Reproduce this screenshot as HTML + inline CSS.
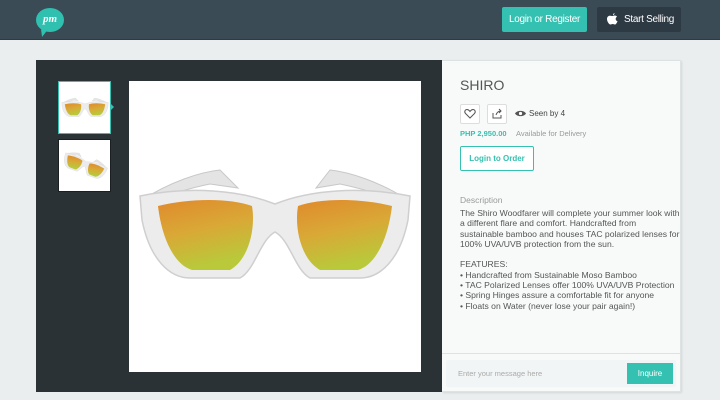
<!DOCTYPE html>
<html><head><meta charset="utf-8"><style>
*{margin:0;padding:0;box-sizing:border-box}
body{width:720px;height:400px;background:#ebeeef;font-family:"Liberation Sans",sans-serif;position:relative;overflow:hidden}
.hdr{position:absolute;left:0;top:0;width:720px;height:40px;background:#3b4b56;border-bottom:1px solid #2e3b44}
.logo{position:absolute;left:36px;top:8px;width:28px;height:24px;border-radius:50%;background:#2fc0b0;color:#fff;font:italic bold 11px "Liberation Serif",serif;text-align:center;line-height:23px}
.logo:after{content:"";position:absolute;left:4px;bottom:-5px;border-left:3px solid transparent;border-right:3px solid transparent;border-top:7px solid #2fc0b0;transform:rotate(15deg)}
.btn1{position:absolute;left:502px;top:7px;width:85px;height:25px;background:#35c1b1;color:#fff;font-size:10px;line-height:25px;text-align:center;border-radius:2px;letter-spacing:-0.3px}
.btn2{position:absolute;left:597px;top:7px;width:84px;height:25px;background:#2e3a43;color:#fff;font-size:10px;line-height:25px;border-radius:2px;padding-left:27px;letter-spacing:-0.3px}
.dark{position:absolute;left:36px;top:60px;width:406px;height:332px;background:#2a3235}
.main{position:absolute;left:129px;top:81px;width:292px;height:291px;background:#fff}
.th{position:absolute;left:58px;width:53px;height:53px;background:#fff;border:1px solid #1a1f21}
.right{position:absolute;left:442px;top:60px;width:239px;height:332px;background:#f8fafa;border:1px solid #dde2e3;border-left:none;box-shadow:1px 1px 2px rgba(0,0,0,.1)}
.t{position:absolute;color:#555;font-size:8px}
</style></head><body>
<div class="hdr">
<div class="logo">pm</div>
<div class="btn1">Login or Register</div>
<div class="btn2"><svg style="position:absolute;left:10px;top:6px" width="11" height="13" viewBox="0 0 11 13"><path d="M7.5 0c.1 1-.6 2-1.5 2.3C5.9 1.4 6.6.3 7.5 0zM5.5 3c.8 0 1.3-.5 2.3-.5 1 0 1.8.6 2.2 1.2-2 1.1-1.6 3.9.5 4.5-.5 1.4-1.5 3.300-2.6 3.3-.9 0-1.1-.5-2.200-.5-1.1 0-1.5.6-2.3.5C2.2 11.5 0 8.6 0 6c0-2.2 1.4-3.3 2.7-3.3 1.1 0 1.8.3 2.8.3z" fill="#fff"/></svg>Start Selling</div>
</div>
<div class="dark"></div>
<svg width="0" height="0" style="position:absolute"><defs>
<linearGradient id="ln" x1="0" y1="0" x2="0.3" y2="1"><stop offset="0" stop-color="#e08a2c"/><stop offset=".5" stop-color="#d9a836"/><stop offset="1" stop-color="#b9c93a"/></linearGradient>
<g id="gl">
<path d="M12 40 C40 22 70 12 90 10 L108 28 L80 24 C60 28 40 34 14 44Z" fill="#e4e4e4" stroke="#c8c8c8" stroke-width="1"/>
<path d="M278 40 C250 22 220 12 200 10 L186 28 L210 24 C230 28 250 34 276 44Z" fill="#e4e4e4" stroke="#c8c8c8" stroke-width="1"/>
<path d="M10 36 C60 26 110 30 145 44 C180 30 230 26 280 36 L278 60 C270 100 250 118 230 118 L180 118 C165 110 160 80 145 72 C130 80 125 110 110 118 L60 118 C40 118 20 100 12 60Z" fill="#ececec" stroke="#cfcfcf" stroke-width="1.5"/>
<path d="M28 46 C60 38 100 38 122 46 C126 70 118 100 100 110 L62 110 C45 105 32 80 28 46Z" fill="url(#ln)"/>
<path d="M262 46 C230 38 190 38 168 46 C164 70 172 100 190 110 L228 110 C245 105 258 80 262 46Z" fill="url(#ln)"/>
</g></defs></svg>
<div class="main"><svg style="position:absolute;left:1px;top:79px" width="290" height="130" viewBox="0 0 290 130"><use href="#gl"/></svg></div>
<div class="th" style="top:81px;border:1px solid #35c1b1"><svg style="position:absolute;left:1px;top:14px" width="50" height="23" viewBox="0 0 290 130"><use href="#gl"/></svg></div>
<div style="position:absolute;left:111px;top:104px;border-top:3px solid transparent;border-bottom:3px solid transparent;border-left:3px solid #35c1b1"></div>
<div class="th" style="top:139px"><svg style="position:absolute;left:2px;top:12px;transform:rotate(20deg)" width="48" height="26" viewBox="0 0 290 130"><use href="#gl"/></svg></div>
<div class="right"></div>
<div class="t" style="left:460px;top:77px;font-size:14px;color:#555">SHIRO</div>
<div style="position:absolute;left:460px;top:104px;width:20px;height:20px;border:1px solid #ddd;border-radius:2px;background:#fff"><svg width="18" height="18" viewBox="0 0 18 18"><path d="M9 13 L4.5 8.5 C3 7 4 4.5 6 4.5 7.3 4.5 8.3 5.5 9 6.5 9.7 5.5 10.7 4.5 12 4.5 14 4.5 15 7 13.5 8.5Z" fill="none" stroke="#555" stroke-width="1"/></svg></div>
<div style="position:absolute;left:487px;top:104px;width:20px;height:20px;border:1px solid #ddd;border-radius:2px;background:#fff"><svg width="18" height="18" viewBox="0 0 18 18"><path d="M5 8v5h8v-3M8 10c1-3 3-4 5-4M11 4l2 2-2 2" fill="none" stroke="#555" stroke-width="1"/></svg></div>
<svg style="position:absolute;left:515px;top:110px" width="11" height="7" viewBox="0 0 11 7"><path d="M0 3.5C2 0 9 0 11 3.5 9 7 2 7 0 3.5Z" fill="#555"/><circle cx="5.5" cy="3.5" r="1.6" fill="#fff"/></svg>
<div class="t" style="left:529px;top:109px;font-size:8px;color:#444">Seen by 4</div>
<div class="t" style="left:460px;top:129px;color:#35c1b1;font-weight:bold;font-size:7.5px">PHP 2,950.00</div>
<div class="t" style="left:516px;top:129px;color:#999;font-size:7.5px">Available for Delivery</div>
<div style="position:absolute;left:460px;top:146px;width:74px;height:25px;border:1px solid #35c1b1;border-radius:2px;color:#35c1b1;font-size:8px;font-weight:bold;text-align:center;line-height:23px;background:#fff">Login to Order</div>
<div class="t" style="left:460px;top:195px;color:#999;font-size:8.5px">Description</div>
<div class="t" style="left:460px;top:208px;width:220px;line-height:10.3px;font-size:8.6px">The Shiro Woodfarer will complete your summer look with a different flare and comfort. Handcrafted from sustainable bamboo and houses TAC polarized lenses for 100% UVA/UVB protection from the sun.<br><br>FEATURES:<br>• Handcrafted from Sustainable Moso Bamboo<br>• TAC Polarized Lenses offer 100% UVA/UVB Protection<br>• Spring Hinges assure a comfortable fit for anyone<br>• Floats on Water (never lose your pair again!)</div>
<div style="position:absolute;left:442px;top:353px;width:239px;height:1px;background:#dde2e3"></div>
<div style="position:absolute;left:446px;top:360px;width:230px;height:27px;background:#f2f5f5;border-radius:2px"></div>
<div class="t" style="left:458px;top:369px;color:#aaa;font-size:7.5px">Enter your message here</div>
<div style="position:absolute;left:627px;top:363px;width:46px;height:21px;background:#35c1b1;color:#fff;font-size:8px;text-align:center;line-height:21px">Inquire</div>
</body></html>
